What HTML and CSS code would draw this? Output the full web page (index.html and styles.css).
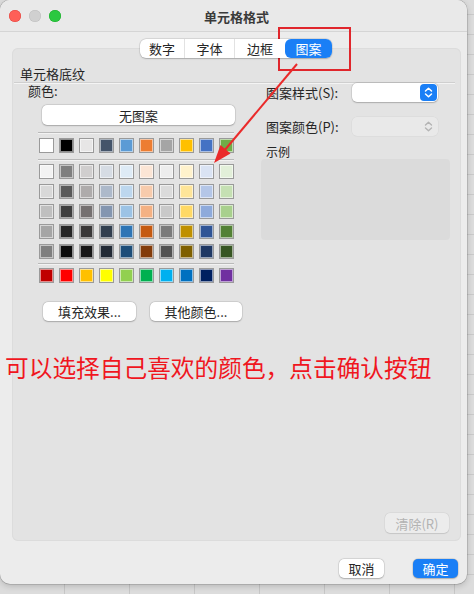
FILE: index.html
```html
<!DOCTYPE html>
<html lang="zh-CN">
<head>
<meta charset="utf-8">
<title>单元格格式</title>
<link rel="stylesheet" href="styles.css">
</head>
<body>
<div class="desk">
  <div class="window">
    <div class="titlebar">
      <div class="lights"><span class="light red"></span><span class="light gray"></span><span class="light green"></span></div>
      <div class="title">单元格格式</div>
      <div></div>
    </div>
    <div class="tabs">
      <div class="seg s1">数字</div><div class="seg s2">字体</div><div class="seg s3">边框</div><div class="seg s4 active">图案</div>
    </div>
    <div class="panel">
      <div class="group-title">单元格底纹</div>
      <div class="cols">
        <div class="left">
          <div class="label">颜色:</div>
          <div class="btn nopattern">无图案</div>
          <div class="palette">
            <div class="sep"></div>
            <div class="row first">
              <span class="sw" style="background:#ffffff"></span><span class="sw" style="background:#000000"></span><span class="sw" style="background:#e7e6e6"></span><span class="sw" style="background:#44546a"></span><span class="sw" style="background:#5b9bd5"></span><span class="sw" style="background:#ed7d31"></span><span class="sw" style="background:#a5a5a5"></span><span class="sw" style="background:#ffc000"></span><span class="sw" style="background:#4472c4"></span><span class="sw" style="background:#70ad47"></span>
            </div>
            <div class="sep"></div>
            <div class="shades">
              <div class="row">
                <span class="sw" style="background:#f2f2f2"></span><span class="sw" style="background:#7f7f7f"></span><span class="sw" style="background:#d0cece"></span><span class="sw" style="background:#d6dce4"></span><span class="sw" style="background:#deebf6"></span><span class="sw" style="background:#fbe5d5"></span><span class="sw" style="background:#ededed"></span><span class="sw" style="background:#fff2cc"></span><span class="sw" style="background:#dae3f3"></span><span class="sw" style="background:#e2efd9"></span>
              </div>
              <div class="row">
                <span class="sw" style="background:#d8d8d8"></span><span class="sw" style="background:#595959"></span><span class="sw" style="background:#aeabab"></span><span class="sw" style="background:#adb9ca"></span><span class="sw" style="background:#bdd7ee"></span><span class="sw" style="background:#f7cbac"></span><span class="sw" style="background:#dbdbdb"></span><span class="sw" style="background:#fee599"></span><span class="sw" style="background:#b4c6e7"></span><span class="sw" style="background:#c5e0b3"></span>
              </div>
              <div class="row">
                <span class="sw" style="background:#bfbfbf"></span><span class="sw" style="background:#3f3f3f"></span><span class="sw" style="background:#757070"></span><span class="sw" style="background:#8496b0"></span><span class="sw" style="background:#9cc3e5"></span><span class="sw" style="background:#f4b183"></span><span class="sw" style="background:#c9c9c9"></span><span class="sw" style="background:#ffd965"></span><span class="sw" style="background:#8eaadb"></span><span class="sw" style="background:#a8d08d"></span>
              </div>
              <div class="row">
                <span class="sw" style="background:#a5a5a5"></span><span class="sw" style="background:#262626"></span><span class="sw" style="background:#3a3838"></span><span class="sw" style="background:#323f4f"></span><span class="sw" style="background:#2e75b5"></span><span class="sw" style="background:#c55a11"></span><span class="sw" style="background:#7b7b7b"></span><span class="sw" style="background:#bf9000"></span><span class="sw" style="background:#2f5496"></span><span class="sw" style="background:#538135"></span>
              </div>
              <div class="row">
                <span class="sw" style="background:#7f7f7f"></span><span class="sw" style="background:#0c0c0c"></span><span class="sw" style="background:#171616"></span><span class="sw" style="background:#222a35"></span><span class="sw" style="background:#1e4e79"></span><span class="sw" style="background:#833c0b"></span><span class="sw" style="background:#525252"></span><span class="sw" style="background:#7f6000"></span><span class="sw" style="background:#1f3864"></span><span class="sw" style="background:#375623"></span>
              </div>
            </div>
            <div class="sep sep3"></div>
            <div class="row standard">
              <span class="sw" style="background:#c00000"></span><span class="sw" style="background:#ff0000"></span><span class="sw" style="background:#ffc000"></span><span class="sw" style="background:#ffff00"></span><span class="sw" style="background:#92d050"></span><span class="sw" style="background:#00b050"></span><span class="sw" style="background:#00b0f0"></span><span class="sw" style="background:#0070c0"></span><span class="sw" style="background:#002060"></span><span class="sw" style="background:#7030a0"></span>
            </div>
          </div>
          <div class="btnrow">
            <div class="btn fill">填充效果...</div>
            <div class="btn more">其他颜色...</div>
          </div>
        </div>
        <div class="right">
          <div class="field">
            <span class="flabel">图案样式(S):</span>
            <div class="select">
              <span class="stepper">
                <svg width="17" height="17" viewBox="0 0 17 17"><path d="M5.5 7 L8.5 4.2 L11.5 7 M5.5 10 L8.5 12.8 L11.5 10" fill="none" stroke="#ffffff" stroke-width="1.5" stroke-linecap="round" stroke-linejoin="round"/></svg>
              </span>
            </div>
          </div>
          <div class="field second">
            <span class="flabel">图案颜色(P):</span>
            <div class="select disabled">
              <span class="stepper off">
                <svg width="17" height="17" viewBox="0 0 17 17"><path d="M5.5 7 L8.5 4.2 L11.5 7 M5.5 10 L8.5 12.8 L11.5 10" fill="none" stroke="#b4b4b4" stroke-width="1.4" stroke-linecap="round" stroke-linejoin="round"/></svg>
              </span>
            </div>
          </div>
          <div class="sample-label">示例</div>
          <div class="sample"></div>
        </div>
      </div>
      <div class="panel-foot"><div class="btn clear">清除(R)</div></div>
    </div>
    <div class="footer">
      <div class="btn cancel">取消</div>
      <div class="btn primary">确定</div>
    </div>
  </div>
  <div class="note">可以选择自己喜欢的颜色，点击确认按钮</div>
  <svg class="annot" width="474" height="594" viewBox="0 0 474 594">
    <rect x="279" y="28" width="71" height="42" fill="none" stroke="#e0262c" stroke-width="2"/>
    <line x1="297" y1="64" x2="224" y2="151" stroke="#ea2a2a" stroke-width="2"/>
    <polygon points="214,163 220.5,145 230.5,153.5" fill="#ea2a2a"/>
  </svg>
</div>
</body>
</html>
```

FILE: styles.css
```css
* { box-sizing: border-box; }
html, body { margin: 0; padding: 0; }
body {
  font-family: "Noto Sans CJK SC", "Noto Sans", "Liberation Sans", sans-serif;
  font-size: 13px;
  color: #262626;
}
.desk {
  position: relative;
  width: 474px;
  height: 594px;
  overflow: hidden;
  background-color: #dcdcdc;
  background-image:
    repeating-linear-gradient(90deg, transparent 0 64px, #c6c6c6 64px 65px, transparent 65px 60px),
    repeating-linear-gradient(0deg, transparent 0 19px, #cacaca 19px 20px);
}
.window {
  width: 467px;
  height: 584px;
  background: #ececec;
  border-radius: 10px;
  box-shadow: 0 0 0 0.5px rgba(0,0,0,0.22), 0 2px 6px rgba(0,0,0,0.18);
  display: flex;
  flex-direction: column;
}
.titlebar {
  height: 32px;
  border-bottom: 1px solid #d5d5d5;
  display: grid;
  grid-template-columns: 1fr auto 1fr;
  align-items: center;
  border-radius: 10px 10px 0 0;
  background: #e9e9e9;
}
.lights { display: flex; gap: 8px; padding-left: 9px; }
.light { width: 12px; height: 12px; border-radius: 50%; display: block; }
.light.red { background: #fe5f57; box-shadow: inset 0 0 0 0.5px #e0443e; }
.light.gray { background: #d0d0d0; box-shadow: inset 0 0 0 0.5px #bdbdbd; }
.light.green { background: #2bc840; box-shadow: inset 0 0 0 0.5px #1aab29; }
.title {
  font-weight: 600;
  font-size: 13px;
  color: #3a3a3a;
  padding-left: 6px;
  padding-top: 1px;
}
.tabs {
  position: relative;
  z-index: 2;
  display: flex;
  margin: 7px 0 0 140px;
  width: 192px;
  height: 19px;
  background: #ffffff;
  border-radius: 6px;
  box-shadow: 0 0 0 0.5px rgba(0,0,0,0.12), 0 0.5px 1.5px rgba(0,0,0,0.2);
}
.seg {
  display: flex;
  align-items: center;
  justify-content: center;
  font-size: 13px;
  line-height: 19px;
  color: #262626;
  border-right: 1px solid #e2e2e2;
}
.s1 { width: 45px; }
.s2 { width: 50px; }
.s3 { width: 50px; border-right: none; }
.s4 { width: 47px; border-right: none; }
.seg.active {
  background: #1a7ff6;
  color: #ffffff;
  border-radius: 6px;
}
.panel {
  margin: -10px 6px 0 12px;
  height: 493px;
  background: #e3e3e3;
  border-radius: 6px;
  box-shadow: inset 0 0 0 1px #dcdcdc;
  padding-top: 18px;
  display: flex;
  flex-direction: column;
}
.group-title {
  margin: 0 6px 0 2px;
  padding-left: 6px;
  line-height: 16px;
  font-size: 13px;
  border-bottom: 1px solid #cfcfcf;
  box-shadow: 0 1px 0 #f4f4f4;
  color: #262626;
}
.cols {
  flex: 1;
  display: flex;
  gap: 19px;
}
.left { width: 230px; }
.label { padding-left: 16px; line-height: 16px; }
.btn {
  background: #ffffff;
  border-radius: 5px;
  box-shadow: 0 0 0 0.5px rgba(0,0,0,0.12), 0 0.5px 1.5px rgba(0,0,0,0.22);
  display: flex;
  align-items: center;
  justify-content: center;
  font-size: 13px;
  color: #262626;
}
.nopattern {
  margin: 6px 0 0 30px;
  width: 193px;
  height: 20px;
}
.palette { margin-left: 26px; width: 197px; }
.sep {
  height: 1px;
  width: 196px;
  background: #b9b9b9;
  box-shadow: 0 1px 0 #f2f2f2;
  margin-top: 7px;
}
.palette .sep:nth-child(3) { margin-top: 6px; }
.sep3 { margin-top: 4px; }
.row { display: flex; gap: 5px; padding-left: 1px; }
.row.first { margin-top: 5px; }
.shades { margin-top: 4px; display: flex; flex-direction: column; gap: 5px; }
.row.standard { margin-top: 4px; }
.sw {
  display: block;
  width: 15px;
  height: 15px;
  border: 1px solid #9a9a9a;
  box-shadow: inset 0 0 0 1px rgba(255,255,255,0.55);
}
.btnrow {
  display: flex;
  gap: 14px;
  margin: 19px 0 0 31px;
}
.fill { width: 93px; height: 19px; }
.more { width: 92px; height: 19px; }
.right { width: 190px; }
.field { display: flex; align-items: center; height: 19px; }
.field.second { margin-top: 15px; }
.flabel { width: 91px; padding-left: 5px; font-size: 13px; white-space: nowrap; }
.select {
  width: 86px;
  height: 19px;
  background: #ffffff;
  border-radius: 5px;
  box-shadow: 0 0 0 0.5px rgba(0,0,0,0.12), 0 0.5px 1.5px rgba(0,0,0,0.2);
  display: flex;
  justify-content: flex-end;
  align-items: center;
  padding-right: 1px;
}
.select.disabled { background: #e9e9e9; box-shadow: 0 0 0 0.5px rgba(0,0,0,0.05); }
.stepper {
  width: 17px;
  height: 17px;
  border-radius: 4px;
  background: #1a7ff6;
  display: block;
}
.stepper svg { display: block; }
.stepper.off { background: transparent; }
.sample-label {
  margin-top: 9px;
  padding-left: 5px;
  line-height: 14px;
  font-size: 12px;
}
.sample {
  width: 189px;
  height: 81px;
  background: #dbdbdb;
  border-radius: 4px;
}
.panel-foot {
  display: flex;
  justify-content: flex-end;
  padding: 0 12px 8px 0;
}
.clear {
  width: 64px;
  height: 20px;
  background: #ececec;
  color: #b3b3b3;
  box-shadow: 0 0 0 0.5px rgba(0,0,0,0.06), 0 0.5px 1px rgba(0,0,0,0.1);
}
.footer {
  display: flex;
  justify-content: flex-end;
  gap: 29px;
  padding: 18px 9px 0 0;
}
.cancel { width: 45px; height: 19px; }
.primary { width: 45px; height: 19px; background: #1a7ff6; color: #ffffff; }
.note {
  position: absolute;
  left: 5px;
  top: 354px;
  font-size: 23.7px;
  line-height: 26px;
  color: #f0161e;
  white-space: nowrap;
}
.annot {
  position: absolute;
  left: 0;
  top: 0;
  pointer-events: none;
}
```
